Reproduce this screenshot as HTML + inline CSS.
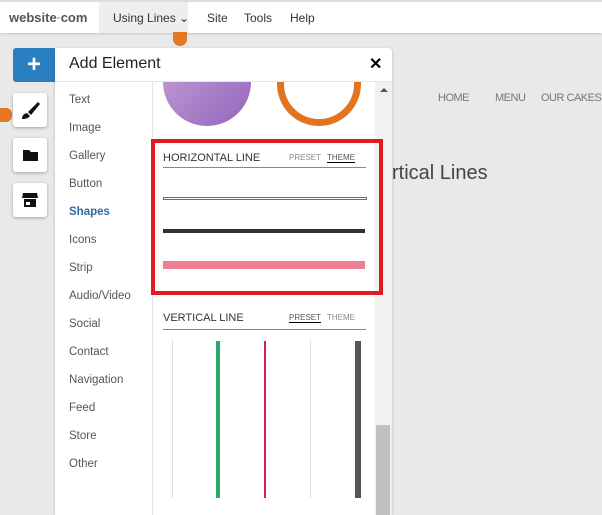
<!DOCTYPE html>
<html><head><style>
*{margin:0;padding:0;box-sizing:border-box}
body{width:602px;height:515px;overflow:hidden;background:#e9e9e9;font-family:"Liberation Sans",sans-serif;position:relative}
.abs{position:absolute}
.top{left:0;top:0;width:602px;height:33px;background:#fff;border-top:2px solid #ddd;box-shadow:0 1px 2px rgba(0,0,0,.15)}
.top span{position:absolute;top:9px;font-size:12px;color:#333}
.side{left:13px;width:34px;height:34px;background:#fff;border-radius:3px;box-shadow:0 1px 3px rgba(0,0,0,.3)}
.menu div{position:absolute;left:14px;font-size:11.5px;color:#555}
</style></head><body>
<div class="abs top">
 <span style="left:9px;font-weight:bold;color:#555;font-size:13px;top:8px">website<span style="position:static;color:#e87722">·</span>com</span>
 <div class="abs" style="left:99px;top:0;width:89px;height:31px;background:#eee"></div>
 <span style="left:113px">Using Lines &#x2304;</span>
 <span style="left:207px">Site</span>
 <span style="left:244px">Tools</span>
 <span style="left:290px">Help</span>
</div>
<div class="abs" style="left:173px;top:32px;width:14px;height:14px;background:#e87722;border-radius:0 0 7px 7px"></div>
<div class="abs" style="left:0;top:108px;width:12px;height:14px;background:#e87722;border-radius:0 6px 6px 0"></div>
<div class="abs" style="left:438px;top:92px;font-size:11px;color:#777;letter-spacing:-.5px">HOME</div>
<div class="abs" style="left:495px;top:92px;font-size:11px;color:#777;letter-spacing:-.5px">MENU</div>
<div class="abs" style="left:541px;top:92px;font-size:11px;color:#777;letter-spacing:-.5px">OUR CAKES</div>
<div class="abs" style="left:392px;top:162px;font-size:20px;color:#444">rtical Lines</div>

<div class="abs" style="left:13px;top:48px;width:42px;height:34px;background:#2a7fc1;border-radius:3px 0 0 3px;color:#fff;font-size:24px;font-weight:bold;text-align:center;line-height:33px">+</div>
<div class="abs side" style="top:93px"><svg width="34" height="34"><path d="M25 9 L15 19 L18 22 L27 11 Z M14 20 Q9 21 9 26 Q15 26 17 23 Z" fill="#111"/></svg></div>
<div class="abs side" style="top:138px"><svg width="34" height="34"><path d="M10 12 h6 l2 2 h7 v9 h-15 z" fill="#111"/></svg></div>
<div class="abs side" style="top:183px"><svg width="34" height="34"><path d="M10 10 h14 l1 5 h-16 z M11 16 h12 v8 h-12 z" fill="#111"/><rect x="13" y="19" width="4" height="3" fill="#fff"/></svg></div>

<div class="abs" style="left:55px;top:48px;width:337px;height:467px;background:#fff;border-radius:0 4px 0 0;box-shadow:0 1px 3px rgba(0,0,0,.2)">
 <div class="abs" style="left:14px;top:7px;font-size:16px;color:#222">Add Element</div>
 <div class="abs" style="left:314px;top:6px;font-size:16px;font-weight:bold;color:#000">✕</div>
 <div class="abs" style="left:0;top:33px;width:337px;height:1px;background:#e4e4e4"></div>
 <div class="abs menu" style="left:0;top:34px;width:97px;height:433px">
  <div style="top:12px">Text</div><div style="top:40px">Image</div><div style="top:68px">Gallery</div><div style="top:96px">Button</div>
  <div style="top:124px;color:#2f6aa8;font-weight:bold">Shapes</div><div style="top:152px">Icons</div><div style="top:180px">Strip</div>
  <div style="top:208px">Audio/Video</div><div style="top:236px">Social</div><div style="top:264px">Contact</div>
  <div style="top:292px">Navigation</div><div style="top:320px">Feed</div><div style="top:348px">Store</div><div style="top:376px">Other</div>
 </div>
 <div class="abs" style="left:97px;top:34px;width:1px;height:433px;background:#e4e4e4"></div>
 <div class="abs" style="left:320px;top:34px;width:17px;height:433px;background:#f1f1f1"></div>
 <div class="abs" style="left:325px;top:40px;width:0;height:0;border-left:4px solid transparent;border-right:4px solid transparent;border-bottom:4px solid #555"></div>
 <div class="abs" style="left:321px;top:377px;width:14px;height:90px;background:#c1c1c1"></div>
 <div class="abs" style="overflow:hidden;left:98px;top:34px;width:222px;height:433px">
  <div class="abs" style="left:10px;top:-44px;width:88px;height:88px;border-radius:50%;background:linear-gradient(135deg,#c7a3d8,#9466bc)"></div>
  <div class="abs" style="left:124px;top:-40px;width:84px;height:84px;border-radius:50%;border:7px solid #e07420"></div>
  <div class="abs" style="left:10px;top:70px;font-size:11px;color:#333">HORIZONTAL LINE</div>
  <div class="abs" style="left:136px;top:71px;font-size:8px;color:#888">PRESET</div>
  <div class="abs" style="left:174px;top:71px;font-size:8px;color:#555;border-bottom:1px solid #000">THEME</div>
  <div class="abs" style="left:10px;top:85px;width:203px;height:1px;background:#888"></div>
  <div class="abs" style="left:10px;top:115px;width:204px;height:3px;border:1px solid #3a7ca8"></div>
  <div class="abs" style="left:10px;top:147px;width:202px;height:4px;background:#333"></div>
  <div class="abs" style="left:10px;top:179px;width:202px;height:8px;background:#ec7f93"></div>
  <div class="abs" style="left:10px;top:230px;font-size:11px;color:#333">VERTICAL LINE</div>
  <div class="abs" style="left:136px;top:231px;font-size:8px;color:#555;border-bottom:1px solid #000">PRESET</div>
  <div class="abs" style="left:174px;top:231px;font-size:8px;color:#888">THEME</div>
  <div class="abs" style="left:10px;top:247px;width:203px;height:1px;background:#888"></div>
  <div class="abs" style="left:19px;top:258px;width:1px;height:158px;background:#ddd"></div>
  <div class="abs" style="left:63px;top:259px;width:4px;height:157px;background:#2aa865"></div>
  <div class="abs" style="left:111px;top:259px;width:2px;height:157px;background:#d61f5a"></div>
  <div class="abs" style="left:157px;top:258px;width:1px;height:158px;background:#ddd"></div>
  <div class="abs" style="left:202px;top:259px;width:6px;height:157px;background:#555"></div>
 </div>
</div>
<div class="abs" style="left:151px;top:139px;width:232px;height:156px;border:4px solid #e21b23"></div>
</body></html>
